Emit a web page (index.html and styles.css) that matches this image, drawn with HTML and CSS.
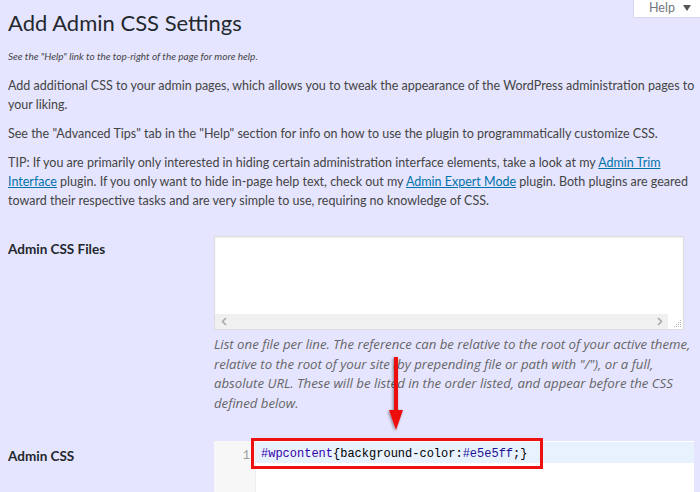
FILE: index.html
```html
<!DOCTYPE html>
<html lang="en">
<head>
<meta charset="utf-8">
<title>Add Admin CSS Settings</title>
<link rel="stylesheet" href="styles.css">
</head>
<body>
<div class="wrap">
  <div class="help-tab">Help <svg class="tri" width="8" height="6" viewBox="0 0 8 6"><polygon points="0,0 8,0 4,6" fill="#555"/></svg></div>
  <h1>Add Admin CSS Settings</h1>
  <p class="note">See the "Help" link to the top-right of the page for more help.</p>
  <p class="first">Add additional CSS to your admin pages, which allows you to tweak the appearance of the WordPress administration pages to your liking.</p>
  <p>See the "Advanced Tips" tab in the "Help" section for info on how to use the plugin to programmatically customize CSS.</p>
  <p>TIP: If you are primarily only interested in hiding certain administration interface elements, take a look at my <a href="#">Admin Trim</a> <a href="#">Interface</a> plugin. If you only want to hide in-page help text, check out my <a href="#">Admin Expert Mode</a> plugin. Both plugins are geared toward their respective tasks and are very simple to use, requiring no knowledge of CSS.</p>

  <div class="form-table">
    <div class="row">
      <div class="th">Admin CSS Files</div>
      <div class="td">
        <div class="files-box">
          <div class="files-area"></div>
          <div class="files-bottom">
            <div class="hscroll">
              <svg width="6" height="9" viewBox="0 0 6 9"><polyline points="5,1 1.5,4.5 5,8" fill="none" stroke="#a8a8a8" stroke-width="1.6"/></svg>
              <svg width="6" height="9" viewBox="0 0 6 9"><polyline points="1,1 4.5,4.5 1,8" fill="none" stroke="#a8a8a8" stroke-width="1.6"/></svg>
            </div>
            <div class="grip">
              <svg width="12" height="12" viewBox="0 0 12 12"><g fill="#b4b4b4"><rect x="9" y="3" width="1" height="1"/><rect x="7" y="5" width="1" height="1"/><rect x="9" y="5" width="1" height="1"/><rect x="5" y="7" width="1" height="1"/><rect x="7" y="7" width="1" height="1"/><rect x="9" y="7" width="1" height="1"/><rect x="3" y="9" width="1" height="1"/><rect x="5" y="9" width="1" height="1"/><rect x="7" y="9" width="1" height="1"/><rect x="9" y="9" width="1" height="1"/></g></svg>
            </div>
          </div>
        </div>
        <p class="description">List one file per line. The reference can be relative to the root of your active theme, relative to the root of your site (by prepending file or path with "/"), or a full, absolute URL. These will be listed in the order listed, and appear before the CSS defined below.</p>
      </div>
    </div>
    <div class="row">
      <div class="th th2">Admin CSS</div>
      <div class="td td2">
        <div class="editor-wrap">
          <div class="editor">
            <div class="gutter"><div class="lineno">1</div></div>
            <div class="code">
              <div class="code-line active"><span class="cm-builtin">#wpcontent</span>{background-color:<span class="cm-atom">#e5e5ff</span>;}</div>
            </div>
          </div>
          <div class="highlight-box"></div>
          <svg class="arrow" width="24" height="80" viewBox="0 0 24 80">
            <defs>
              <filter id="sh" x="-50%" y="-20%" width="200%" height="140%">
                <feDropShadow dx="-1" dy="1" stdDeviation="1.5" flood-color="#000" flood-opacity="0.45"/>
              </filter>
            </defs>
            <g filter="url(#sh)">
              <rect x="10" y="2" width="4" height="55" fill="#ee1111"/>
              <polygon points="5,55 19,55 12,75" fill="#ee1111"/>
            </g>
          </svg>
        </div>
      </div>
    </div>
  </div>
</div>
</body>
</html>
```

FILE: styles.css
```css
html, body {
  margin: 0;
  padding: 0;
  background: #e5e5ff;
}
body {
  font-family: "Lato", "Open Sans", sans-serif;
  color: #444;
  font-size: 12.5px;
}
.wrap {
  padding: 0 0 0 8px;
}
.help-tab {
  float: right;
  width: 66px;
  height: 17px;
  box-sizing: border-box;
  background: #fff;
  color: #72777c;
  font-size: 12.5px;
  line-height: 15px;
  padding-left: 15px;
  box-shadow: 0 0 0 1px rgba(0,0,0,0.06);
}
.help-tab .tri {
  margin-left: 5px;
  vertical-align: 1px;
}
h1 {
  margin: 0;
  padding-top: 8px;
  font-size: 22px;
  line-height: 30px;
  font-weight: 400;
  color: #23282d;
}
p {
  margin: 10px 0 0;
  line-height: 19px;
  padding-right: 2px;
}
p.note {
  margin-top: 12px;
  font-size: 10px;
  line-height: 13px;
  font-style: italic;
}
p.first {
  margin-top: 13px;
}
a {
  color: #0073aa;
  text-decoration: underline;
}
.form-table {
  margin-top: 10px;
}
.row {
  display: grid;
  grid-template-columns: 206px 1fr;
}
.th {
  padding-top: 20px;
  font-size: 13.5px;
  line-height: 18px;
  font-weight: 700;
  color: #23282d;
}
.th2 {
  padding-top: 21px;
}
.td {
  padding-top: 16px;
  padding-bottom: 13px;
}
.td2 {
  padding-top: 15px;
  padding-bottom: 0;
}
.files-box {
  width: 470px;
  height: 94px;
  box-sizing: border-box;
  border: 1px solid #ddd;
  background: #fff;
  display: flex;
  flex-direction: column;
  box-shadow: inset 0 1px 2px rgba(0,0,0,0.07);
}
.files-area {
  flex: 1;
}
.files-bottom {
  display: flex;
  height: 15px;
}
.hscroll {
  flex: 1;
  background: #f0f0f0;
  display: flex;
  justify-content: space-between;
  align-items: center;
  padding: 0 5px 0 6px;
}
.grip {
  width: 15px;
  display: flex;
  align-items: flex-end;
  justify-content: flex-end;
}
.description {
  margin-top: 5px;
  width: 482px;
  font-family: "Open Sans", sans-serif;
  font-size: 13.2px;
  font-style: italic;
  color: #666;
  line-height: 19.5px;
}
.editor-wrap {
  position: relative;
  width: 480px;
}
.editor {
  display: flex;
  height: 160px;
  background: #fff;
}
.gutter {
  width: 42px;
  background: #f7f7f7;
  border-right: 1px solid #eee;
  box-sizing: border-box;
}
.lineno {
  text-align: right;
  padding: 7px 5px 0 0;
  font-family: "Liberation Mono", monospace;
  font-size: 12px;
  line-height: 16px;
  color: #999;
}
.code {
  flex: 1;
  padding-top: 1px;
}
.code-line {
  font-family: "Liberation Mono", monospace;
  font-size: 12px;
  line-height: 21px;
  padding: 2px 0 0 5px;
  height: 21px;
  box-sizing: border-box;
  color: #000;
}
.code-line.active {
  background: #e8f2ff;
}
.cm-builtin {
  color: #30a;
}
.cm-atom {
  color: #219;
}
.highlight-box {
  position: absolute;
  left: 37px;
  top: -3px;
  width: 292px;
  height: 31px;
  box-sizing: border-box;
  border: 3px solid #ee1111;
}
.arrow {
  position: absolute;
  left: 170px;
  top: -86px;
}
```
